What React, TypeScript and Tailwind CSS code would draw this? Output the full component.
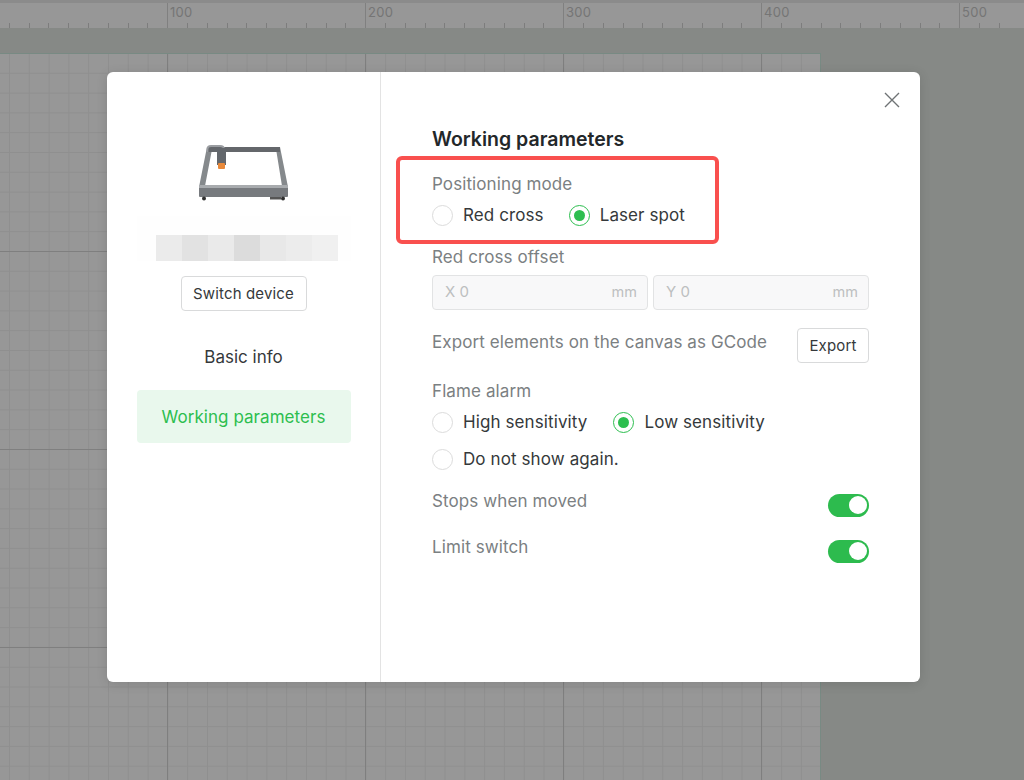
import React from "react";

function Radio({ on, label, className = "" }: { on?: boolean; label: string; className?: string }) {
  return (
    <div className={`flex items-center ${className}`}>
      {on ? (
        <span className="flex h-[21px] w-[21px] items-center justify-center rounded-full border border-[#2dbe4f]">
          <span className="h-[11px] w-[11px] rounded-full bg-[#2dbe4f]" />
        </span>
      ) : (
        <span className="h-[21px] w-[21px] rounded-full border border-[#dcdcdc]" />
      )}
      <span className="ml-[10px] text-[17px] tracking-[0.1px] text-[#35393b]">{label}</span>
    </div>
  );
}

function Label({ children, className = "" }: { children: React.ReactNode; className?: string }) {
  return <div className={`text-[17px] leading-6 tracking-[0.1px] text-[#7b8082] ${className}`}>{children}</div>;
}

function Toggle() {
  return (
    <div className="flex h-[23px] w-[41px] items-center justify-end rounded-full bg-[#2dbb4e] pr-[2px]">
      <span className="h-[18px] w-[18px] rounded-full bg-white" />
    </div>
  );
}

function Field({ name }: { name: string }) {
  return (
    <div className="flex h-[35px] flex-1 items-center justify-between rounded-[4px] border border-[#e2e3e4] bg-[#f8f8f9] px-3 text-[#bdbfc0]">
      <span className="text-[15px]">{name} 0</span>
      <span className="mr-[-2px] text-[14.5px]">mm</span>
    </div>
  );
}

function Device() {
  return (
    <svg width="96" height="66" viewBox="0 0 96 66" className="blur-[0.6px]">
      <path d="M11 10 H84 L92 50 H3 Z M15.5 15 L9 49 H86 L80.5 15 Z" fill="#85898c" fillRule="evenodd" />
      <rect x="11" y="10" width="73" height="5" fill="#64676b" />
      <rect x="3" y="48" width="89" height="12" rx="1" fill="#777a7e" />
      <rect x="3" y="48" width="89" height="3" fill="#a8abae" />
      <path d="M11.5 15 V12 Q11.5 9 15 9 H24 Q28 9 28 12" fill="none" stroke="#9a9da1" strokeWidth="1.8" />
      <rect x="21" y="11" width="9" height="17" fill="#63676c" />
      <rect x="22" y="26" width="7" height="6" rx="1" fill="#e8893a" />
      <circle cx="8" cy="61.5" r="2" fill="#2f2f2f" />
      <circle cx="87" cy="61.5" r="2" fill="#2f2f2f" />
      <rect x="74" y="60" width="11" height="2.5" fill="#555" />
    </svg>
  );
}

const blocks = ["#ebebeb", "#e2e2e2", "#eaeaea", "#dcdcdc", "#e8e8e8", "#ececec", "#f0f0f0"];
const ticks = [100, 200, 300, 400, 500];

export default function App() {
  return (
    <div
      className="relative h-[780px] w-[1024px] overflow-hidden bg-[#868986]"
      style={{ fontFamily: "Inter, 'Noto Sans', sans-serif" }}
    >
      {/* Ruler */}
      <div className="flex h-7 border-t-[3px] border-[#8b8b8b] bg-[#979797] bg-[repeating-linear-gradient(90deg,transparent_0,transparent_18.8px,#7d7d7d_18.8px,#7d7d7d_19.8px)] bg-[position:-10px_bottom] bg-[length:100%_5px] bg-no-repeat pl-[167px]">
        {ticks.map((t) => (
          <div key={t} className="h-full w-[198px] shrink-0 border-l border-[#808080] pl-[2px] text-[13px] leading-[19px] tracking-[0.3px] text-[#757575]">
            {t}
          </div>
        ))}
      </div>
      {/* Canvas */}
      <div className="mt-[25px] h-[727px] w-[821px] border-t border-r border-[#788a83] bg-[#979797] bg-[linear-gradient(90deg,#7f7f7f_1px,transparent_1px),linear-gradient(180deg,#7f7f7f_1px,transparent_1px),linear-gradient(90deg,#8f8f8f_1px,transparent_1px),linear-gradient(180deg,#8f8f8f_1px,transparent_1px)] bg-[length:198px_198px,198px_198px,19.8px_19.8px,19.8px_19.8px] bg-[position:167px_0,0_-1px,9px_0,0_-1px]" />

      {/* Modal */}
      <div className="absolute left-[107px] top-[72px] flex h-[610px] w-[813px] rounded-[6px] bg-white shadow-[0_2px_12px_rgba(0,0,0,0.12)]">
        <div className="flex w-[274px] shrink-0 flex-col items-center border-r border-[#e3e3e3] pt-[65px]">
          <Device />
          <div className="mt-[13px] flex h-[45px] w-[214px] items-end justify-center bg-[#fefefe] pl-[6px]">
            <div className="flex">
              {blocks.map((c, i) => (
                <span key={i} className="h-[26px] w-[26px]" style={{ background: c }} />
              ))}
            </div>
          </div>
          <button className="mt-[15px] h-[35px] w-[126px] rounded-[4px] border border-[#d9dadb] pt-[2px] text-[15px] tracking-[0.15px] text-[#35393b]">
            Switch device
          </button>
          <div className="mt-[34px] text-[17px] leading-6 text-[#35393b]">Basic info</div>
          <div className="mt-[21px] flex h-[53px] w-[214px] items-center justify-center rounded-[4px] bg-[#e9f8ed] pt-[2px] text-[17px] tracking-[0.05px] text-[#2dbe4f]">
            Working parameters
          </div>
        </div>

        <div className="flex-1 pl-[51px] pr-[51px] pt-[55px]">
          <h2 className="text-[19.5px] font-semibold leading-6 text-[#23272a]">Working parameters</h2>
          <Label className="mt-[21px]">Positioning mode</Label>
          <div className="mt-[7px] flex">
            <Radio label="Red cross" />
            <Radio on label="Laser spot" className="ml-[25px]" />
          </div>
          <Label className="mt-[16px]">Red cross offset</Label>
          <div className="mt-[6px] flex gap-[5px]">
            <Field name="X" />
            <Field name="Y" />
          </div>
          <div className="mt-[18px] flex items-start justify-between">
            <Label className="mt-[2px]">Export elements on the canvas as GCode</Label>
            <button className="h-[35px] w-[72px] rounded-[4px] border border-[#d9dadb] pt-[2px] text-[15px] tracking-[0.15px] text-[#35393b]">
              Export
            </button>
          </div>
          <Label className="mt-[16px]">Flame alarm</Label>
          <div className="mt-[7px] flex">
            <Radio label="High sensitivity" />
            <Radio on label="Low sensitivity" className="ml-[26px]" />
          </div>
          <Radio label="Do not show again." className="mt-[12px]" />
          <div className="mt-[16px] flex justify-between">
            <Label>Stops when moved</Label>
            <div className="mt-[5px]"><Toggle /></div>
          </div>
          <div className="mt-[18px] flex justify-between">
            <Label>Limit switch</Label>
            <div className="mt-[5px]"><Toggle /></div>
          </div>
        </div>

        <svg className="absolute right-[20px] top-[20px]" width="16" height="16" viewBox="0 0 16 16" fill="none" stroke="#6f7375" strokeWidth="1.4">
          <path d="M1 1 L15 15 M15 1 L1 15" />
        </svg>
      </div>

      {/* Annotation */}
      <div className="absolute left-[396px] top-[156px] h-[88px] w-[323px] rounded-[6px] border-[4px] border-[#f9504e]" />
    </div>
  );
}
